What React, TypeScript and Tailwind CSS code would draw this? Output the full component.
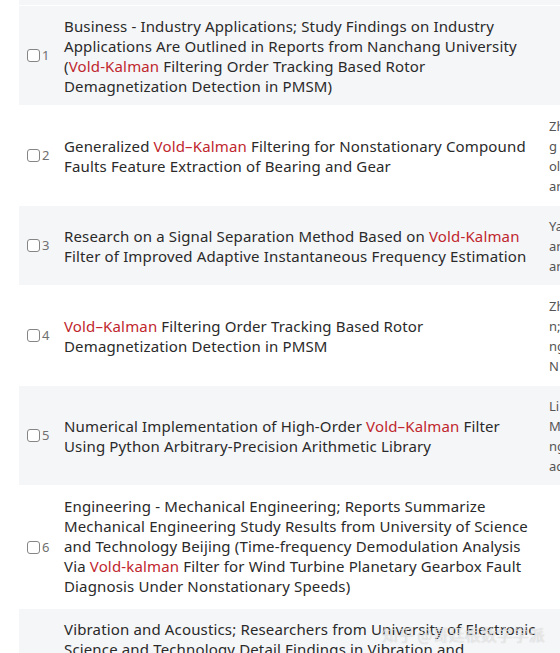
import React from "react";

type Seg = string | { r: string };
type Row = { n: number; lines: Seg[][]; authors: string[]; pb?: string };

const R = (s: string) => ({ r: s });

const rows: Row[] = [
  {
    n: 1,
    lines: [
      ["Business - Industry Applications; Study Findings on Industry"],
      ["Applications Are Outlined in Reports from Nanchang University"],
      ["(", R("Vold-Kalman"), " Filtering Order Tracking Based Rotor"],
      ["Demagnetization Detection in PMSM)"],
    ],
    authors: [],
  },
  {
    n: 2,
    lines: [
      ["Generalized ", R("Vold–Kalman"), " Filtering for Nonstationary Compound"],
      ["Faults Feature Extraction of Bearing and Gear"],
    ],
    authors: ["Zhao Dezun; Li Jianyon", "g ; Cheng Weidong; Wen W", "ol; Zhang Tianyang; Gu F", "ang"],
  },
  {
    n: 3,
    lines: [
      ["Research on a Signal Separation Method Based on ", R("Vold-Kalman")],
      ["Filter of Improved Adaptive Instantaneous Frequency Estimation"],
    ],
    authors: ["Yang Yi; Liu Yang; Zh", "ang Qiang; Liu Yibing; Li", "ang Xue"],
  },
  {
    n: 4,
    lines: [
      [R("Vold–Kalman"), " Filtering Order Tracking Based Rotor"],
      ["Demagnetization Detection in PMSM"],
    ],
    authors: ["Zhang Shuo; Cheng Min; Wa", "n; Hu Jiangbo; Tian Ya", "ng; Liu Kai; Zhao Lin", "N"],
  },
  {
    n: 5,
    lines: [
      ["Numerical Implementation of High-Order ", R("Vold–Kalman"), " Filter"],
      ["Using Python Arbitrary-Precision Arithmetic Library"],
    ],
    authors: ["Li Chen; Wang Hao", "Ma Lin; Zhou Ya", "ng Fan; Xu Jie", "ademic"],
  },
  {
    n: 6,
    lines: [
      ["Engineering - Mechanical Engineering; Reports Summarize"],
      ["Mechanical Engineering Study Results from University of Science"],
      ["and Technology Beijing (Time-frequency Demodulation Analysis"],
      ["Via ", R("Vold-kalman"), " Filter for Wind Turbine Planetary Gearbox Fault"],
      ["Diagnosis Under Nonstationary Speeds)"],
    ],
    authors: [],
    pb: "pb-[12px]",
  },
  {
    n: 7,
    lines: [
      ["Vibration and Acoustics; Researchers from University of Electronic"],
      ["Science and Technology Detail Findings in Vibration and"],
      ["Acoustics (Adaptive Order Tracking Method Using the"],
      [R("Vold-Kalman"), " Filter for Rotating Machinery Under"],
      ["Variable Speed Conditions)"],
    ],
    authors: [],
  },
];

function Line({ segs }: { segs: Seg[] }) {
  return (
    <span className="block whitespace-nowrap">
      {segs.map((s, i) =>
        typeof s === "string" ? (
          <React.Fragment key={i}>{s}</React.Fragment>
        ) : (
          <span key={i} className="text-[#c0262d]">
            {s.r}
          </span>
        )
      )}
    </span>
  );
}

export default function App() {
  return (
    <div
      className="relative h-[653px] w-[560px] overflow-hidden bg-white pl-[19px]"
      style={{ fontFamily: '"Noto Sans", "Open Sans", sans-serif' }}
    >
      <div className="flex w-[700px] flex-col gap-[1px]">
        <div className="h-[5px] bg-[#f5f6f8]" />
        {rows.map((row, idx) => (
          <div
            key={row.n}
            className={
              "flex items-center " + (idx % 2 === 0 ? "bg-[#f5f6f8]" : "bg-white")
            }
          >
            <div className="flex w-[35px] shrink-0 items-center pl-[8px]">
              <span className="box-border inline-block h-[13px] w-[13px] rounded-[3px] border border-[#858585] bg-white" />
              <span className="ml-[2px] text-[13px] leading-[13px] text-[#707070]">{row.n}</span>
            </div>
            <div
              className={
                "w-[485px] shrink-0 px-[10px] pt-[10px] text-[15px] leading-[20px] tracking-[0.15px] text-[#2a2a2a] " +
                (row.pb ?? "pb-[9px]")
              }
            >
              {row.lines.map((l, i) => (
                <Line key={i} segs={l} />
              ))}
            </div>
            <div className="w-[160px] shrink-0 px-[10px] pb-[9px] pt-[10px] text-[13px] leading-[20px] text-[#555]">
              {row.authors.map((a, i) => (
                <span key={i} className="block whitespace-nowrap">
                  {a}
                </span>
              ))}
            </div>
          </div>
        ))}
      </div>
      <div
        className="pointer-events-none absolute left-[382px] top-[624px] whitespace-nowrap text-[16px] leading-[20px] text-white/60"
        style={{
          fontFamily: '"Noto Sans CJK SC", "Noto Sans", sans-serif',
          textShadow: "0 0 1px rgba(120,120,120,0.45)",
        }}
      >
        知乎 @哥廷根数学学派
      </div>
    </div>
  );
}
